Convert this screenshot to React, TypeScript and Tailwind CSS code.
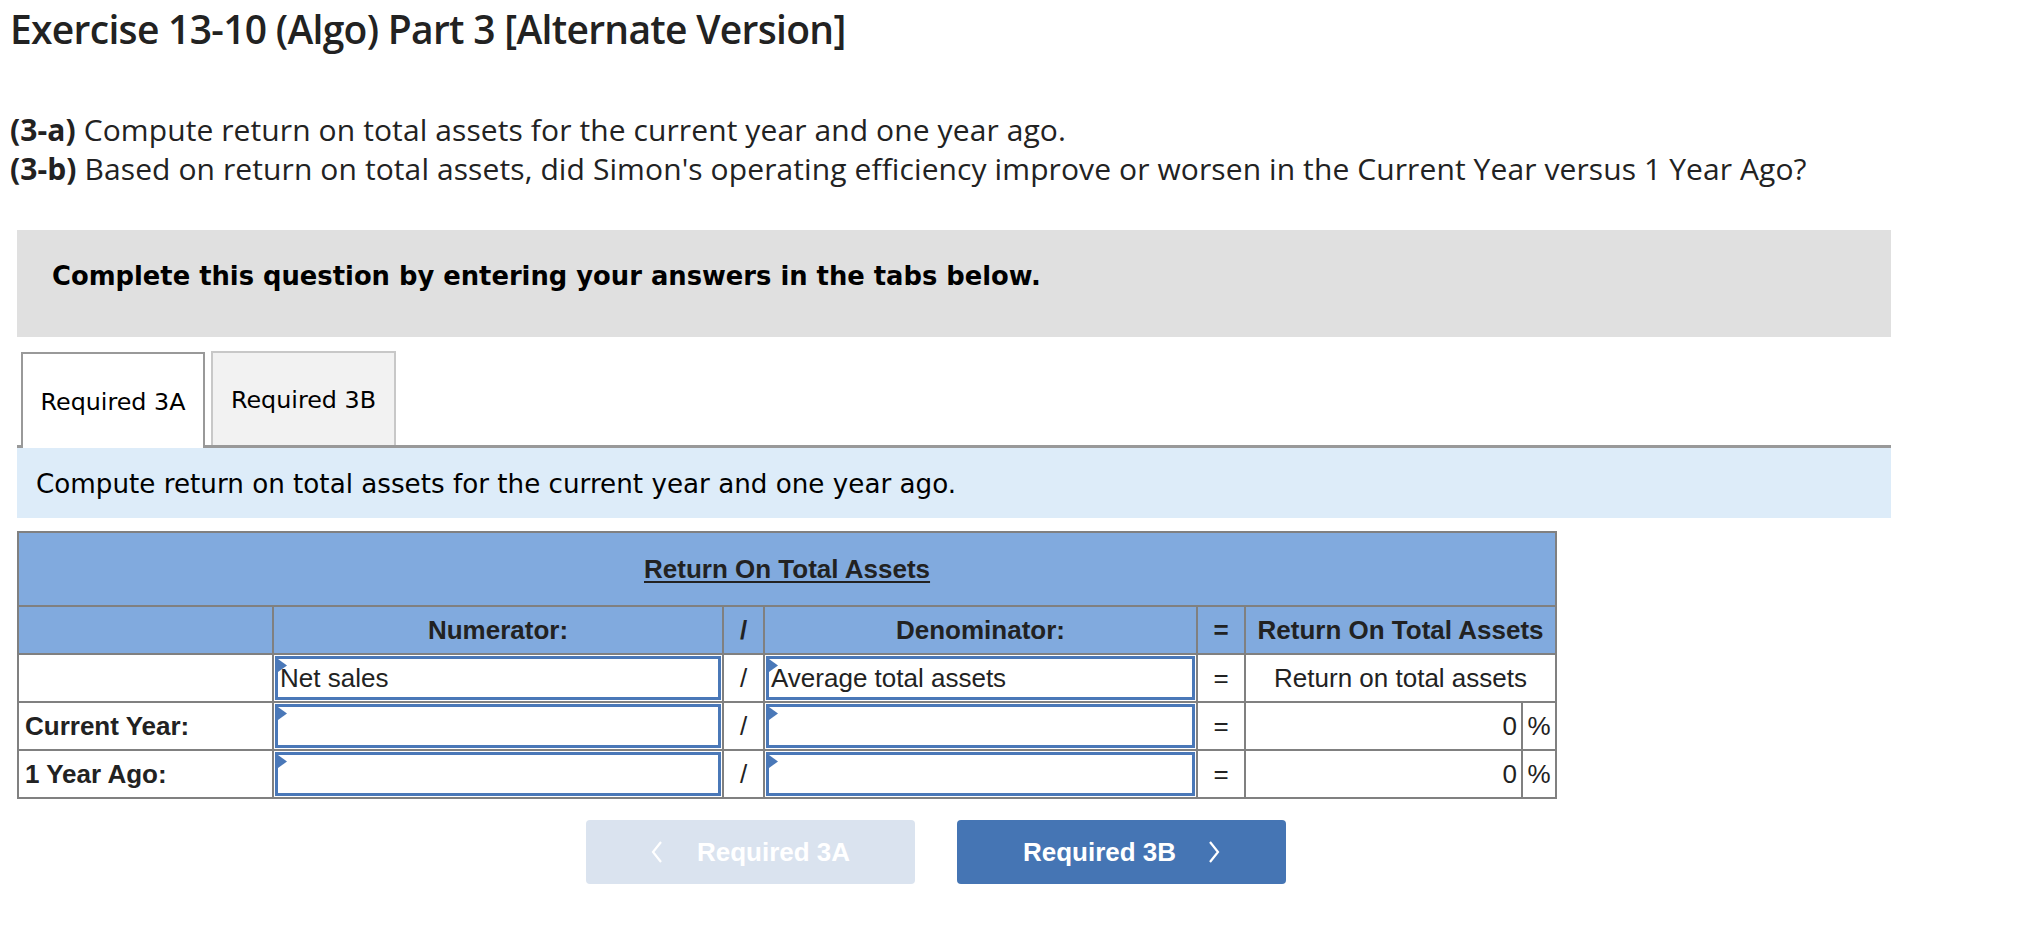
import React from "react";

function Tri() {
  return (
    <svg className="absolute left-0 top-0" width="10" height="13" viewBox="0 0 10 13">
      <polygon points="0,0 9,6.5 0,13" fill="#4a78b8" />
    </svg>
  );
}

function InputCell({ text }: { text?: string }) {
  return (
    <td className="border-2 border-[#808080] p-0 align-middle">
      <div className="relative mx-[1px] h-[44px] border-[3px] border-[#4a78b8] bg-white flex items-center pl-[2px] text-[26px] text-[#222]">
        <Tri />
        {text}
      </div>
    </td>
  );
}

export default function App() {
  return (
    <div className="w-[2038px] h-[930px] bg-white overflow-hidden text-[#222] font-['Liberation_Sans',Arial,sans-serif]">
      <div className="pl-[10px] pt-[6px]">
        <h1 className="font-['Open_Sans',sans-serif] font-semibold text-[39px] leading-[46px] tracking-[-0.7px] text-[#222]">
          Exercise 13-10 (Algo) Part 3 [Alternate Version]
        </h1>
        <div className="mt-[58px] font-['Open_Sans',sans-serif] text-[30px] leading-[39px] tracking-[0.1px] text-[#222]">
          <p>
            <span className="font-bold">(3-a)</span> Compute return on total assets for the current year and one year ago.
          </p>
          <p>
            <span className="font-bold">(3-b)</span> Based on return on total assets, did Simon's operating efficiency improve or worsen in the Current Year versus 1 Year Ago?
          </p>
        </div>
      </div>

      <div className="ml-[17px] w-[1874px] mt-[42px]">
        <div className="h-[107px] bg-[#e0e0e0] pl-[35px] pt-[31px] font-['DejaVu_Sans',Verdana,sans-serif] font-bold text-[25.8px] leading-[30px] text-black">
          Complete this question by entering your answers in the tabs below.
        </div>

        <div className="mt-[15px] flex items-end gap-[6px] pl-[4px] border-b-[3px] border-[#999] h-[96px] font-['DejaVu_Sans',Verdana,sans-serif] text-[23.8px] text-black">
          <div className="-mb-[3px] h-[96px] w-[184px] border-2 border-b-0 border-[#999] bg-white flex items-center justify-center pt-[4px]">
            Required 3A
          </div>
          <div className="h-[94px] w-[185px] border-2 border-b-0 border-[#c8c8c8] bg-[#f2f2f2] flex items-center justify-center pt-[4px]">
            Required 3B
          </div>
        </div>

        <div className="h-[70px] bg-[#ddecf9] pl-[19px] pt-[3px] flex items-center font-['DejaVu_Sans',Verdana,sans-serif] text-[26.2px] text-black">
          Compute return on total assets for the current year and one year ago.
        </div>

        <table className="mt-[13px] border-collapse border-2 border-[#808080] w-[1538px] table-fixed text-[26px] text-[#222]">
          <colgroup>
            <col className="w-[255px]" />
            <col className="w-[450px]" />
            <col className="w-[41px]" />
            <col className="w-[433px]" />
            <col className="w-[48px]" />
            <col className="w-[277px]" />
            <col className="w-[34px]" />
          </colgroup>
          <tbody>
            <tr className="h-[74px] bg-[#81aade]">
              <td colSpan={7} className="border-2 border-[#808080] text-center font-bold">
                <span className="underline underline-offset-[3px]">Return On Total Assets</span>
              </td>
            </tr>
            <tr className="h-[48px] bg-[#81aade] font-bold">
              <td className="border-2 border-[#808080]"></td>
              <td className="border-2 border-[#808080] text-center">Numerator:</td>
              <td className="border-2 border-[#808080] text-center">/</td>
              <td className="border-2 border-[#808080] text-center">Denominator:</td>
              <td className="border-2 border-[#808080] text-center">=</td>
              <td colSpan={2} className="border-2 border-[#808080] text-center">Return On Total Assets</td>
            </tr>
            <tr className="h-[48px] bg-white">
              <td className="border-2 border-[#808080]"></td>
              <InputCell text="Net sales" />
              <td className="border-2 border-[#808080] text-center">/</td>
              <InputCell text="Average total assets" />
              <td className="border-2 border-[#808080] text-center">=</td>
              <td colSpan={2} className="border-2 border-[#808080] text-center">Return on total assets</td>
            </tr>
            <tr className="h-[48px] bg-white">
              <td className="border-2 border-[#808080] pl-[6px] font-bold">Current Year:</td>
              <InputCell />
              <td className="border-2 border-[#808080] text-center">/</td>
              <InputCell />
              <td className="border-2 border-[#808080] text-center">=</td>
              <td className="border-2 border-[#808080] text-right pr-[4px]">0</td>
              <td className="border-2 border-[#808080] text-center">%</td>
            </tr>
            <tr className="h-[48px] bg-white">
              <td className="border-2 border-[#808080] pl-[6px] font-bold">1 Year Ago:</td>
              <InputCell />
              <td className="border-2 border-[#808080] text-center">/</td>
              <InputCell />
              <td className="border-2 border-[#808080] text-center">=</td>
              <td className="border-2 border-[#808080] text-right pr-[4px]">0</td>
              <td className="border-2 border-[#808080] text-center">%</td>
            </tr>
          </tbody>
        </table>

        <div className="mt-[21px] ml-[569px] flex gap-[42px] font-bold text-[26px] text-white">
          <div className="h-[64px] w-[329px] rounded-[4px] bg-[#dae3ef] flex items-center justify-center gap-[34px]">
            <svg width="12" height="24" viewBox="0 0 12 24" fill="none">
              <path d="M10 2 L2 12 L10 22" stroke="white" strokeWidth="2.2" />
            </svg>
            <span>Required 3A</span>
          </div>
          <div className="h-[64px] w-[329px] rounded-[4px] bg-[#4575b4] flex items-center justify-center gap-[32px]">
            <span>Required 3B</span>
            <svg width="12" height="24" viewBox="0 0 12 24" fill="none">
              <path d="M2 2 L10 12 L2 22" stroke="white" strokeWidth="2.2" />
            </svg>
          </div>
        </div>
      </div>
    </div>
  );
}
